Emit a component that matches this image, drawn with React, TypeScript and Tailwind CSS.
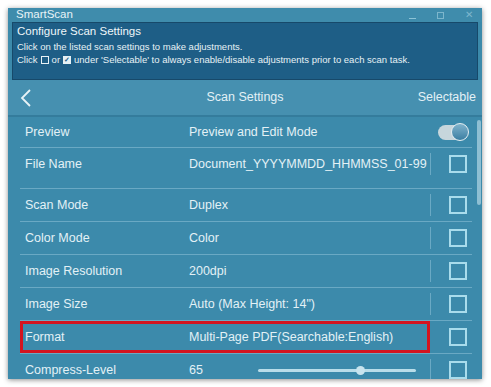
import React from 'react';

type Row = { label: string; value: string; kind?: 'toggle' | 'slider'; tall?: boolean; highlight?: boolean };

const rows: Row[] = [
  { label: 'Preview', value: 'Preview and Edit Mode', kind: 'toggle' },
  { label: 'File Name', value: 'Document_YYYYMMDD_HHMMSS_01-99', tall: true },
  { label: 'Scan Mode', value: 'Duplex' },
  { label: 'Color Mode', value: 'Color' },
  { label: 'Image Resolution', value: '200dpi' },
  { label: 'Image Size', value: 'Auto (Max Height: 14")' },
  { label: 'Format', value: 'Multi-Page PDF(Searchable:English)', highlight: true },
  { label: 'Compress-Level', value: '65', kind: 'slider' },
];

const Checkbox = () => <div className="w-[18px] h-[18px] border-2 border-[#a9dcec]" />;

const SettingRow = ({ row }: { row: Row }) => {
  const h = row.label === 'Preview' ? 'h-[31px]' : row.tall ? 'h-[41px] pb-[8px]' : 'h-[33px]';
  return (
    <div className={`flex items-stretch shrink-0 border-b border-[#6aa9c4] ${h}`}>
      <div
        className={`flex items-center w-[410px] whitespace-nowrap ${
          row.highlight ? 'border-[3px] border-[#d3141f] pl-[2px]' : 'pl-[5px]'
        }`}
      >
        <div className="w-[164px] shrink-0">{row.label}</div>
        <div className="flex-1 flex items-center">
          <span>{row.value}</span>
          {row.kind === 'slider' && (
            <div className="relative ml-[55px] w-[158px] h-[3px] rounded-full bg-[#b9dde9]">
              <div className="absolute left-[98px] top-[-3px] w-[9px] h-[9px] rounded-full bg-[#c8e4ee]" />
            </div>
          )}
        </div>
      </div>
      {row.kind === 'toggle' ? (
        <div className="flex-1 flex items-center justify-end pr-[4px]">
          <div className="relative w-[30px] h-[15px] rounded-full bg-[#c7d6dc]">
            <div className="absolute right-[-1px] top-[-2px] w-[18px] h-[18px] rounded-full bg-gradient-to-b from-[#7fb3cc] to-[#3b7fa3] border border-[#e4eef2]" />
          </div>
        </div>
      ) : (
        <div className="flex-1 flex items-center">
          {!row.highlight && <div className="w-px self-stretch my-[5px] bg-[#6aa9c4]" />}
          <div className={row.highlight ? 'ml-[19px]' : 'ml-[18px]'}>
            <Checkbox />
          </div>
        </div>
      )}
    </div>
  );
};

export default function App() {
  return (
    <div
      className="w-[491px] h-[387px] bg-white p-[8px] overflow-hidden"
      style={{ fontFamily: '"Liberation Sans", Arial, sans-serif' }}
    >
      <div className="w-[474px] h-[371px] bg-[#3c8aab] shadow-[0_1px_5px_rgba(0,0,0,0.45)] flex flex-col overflow-hidden text-[#e3f1f6]">
        {/* title bar */}
        <div className="h-[14px] shrink-0 flex items-center justify-between pl-[8px] pr-[10px] bg-[#3f8cac]">
          <span className="text-[11.5px] leading-none text-[#e8f3f7]">SmartScan</span>
          <div className="flex items-center gap-[21px] text-[#7db6cc]">
            <div className="w-[7px] h-px bg-[#8cc3d6] mt-[6px]" />
            <div className="w-[7px] h-[7px] border border-[#7db6cc]" />
            <span className="w-[7px] text-[10px] leading-none">✕</span>
          </div>
        </div>
        {/* header */}
        <div className="mx-[4px] h-[58px] shrink-0 bg-[#1e5e86] border border-[#17496a] pl-[4px] pt-[1px]">
          <div className="text-[11.5px] leading-[14px] text-[#eef6f9]">Configure Scan Settings</div>
          <div className="text-[9.5px] leading-[13px] mt-[2px] text-[#e6f1f5]">
            Click on the listed scan settings to make adjustments.
          </div>
          <div className="text-[9.5px] leading-[13px] text-[#e6f1f5] flex items-center whitespace-nowrap">
            Click
            <span className="inline-block w-[8px] h-[8px] border border-[#e6f1f5] mx-[3px]" />
            or
            <span className="inline-flex items-center justify-center w-[8px] h-[8px] bg-[#e6f1f5] mx-[3px] text-[#1e5e86] text-[7px] leading-none font-bold">
              ✓
            </span>
            under 'Selectable' to always enable/disable adjustments prior to each scan task.
          </div>
        </div>
        {/* nav */}
        <div className="h-[37px] shrink-0 bg-[#4690b0] border-b-2 border-[#347c9c] flex items-center justify-between relative text-[12.5px]">
          <svg className="ml-[12px]" width="12" height="20" viewBox="0 0 12 20">
            <path d="M10 2 L2 10 L10 18" fill="none" stroke="#e8f3f7" strokeWidth="1.8" />
          </svg>
          <div className="absolute inset-0 flex items-center justify-center pointer-events-none">Scan Settings</div>
          <div className="pr-[6px]">Selectable</div>
        </div>
        {/* list */}
        <div className="flex-1 min-h-0 overflow-hidden flex text-[12.5px]">
          <div className="ml-[12px] w-[452px] shrink-0">
            {rows.map((r) => (
              <SettingRow key={r.label} row={r} />
            ))}
          </div>
          <div className="ml-[5px] pt-[3px]">
            <div className="w-[4px] h-[85px] rounded-full bg-[#8ebfd3]" />
          </div>
        </div>
      </div>
    </div>
  );
}
